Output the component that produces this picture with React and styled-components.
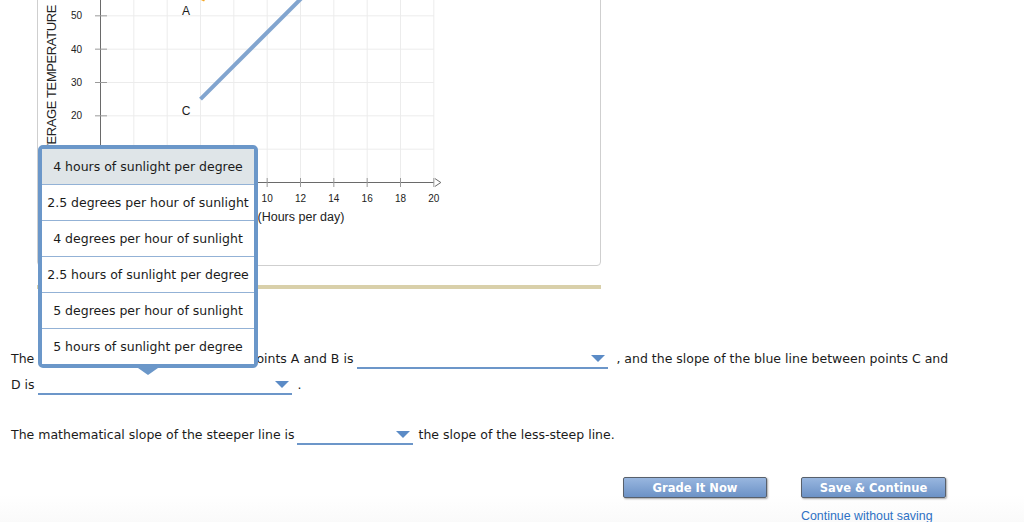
import React from 'react';
import styled, { createGlobalStyle } from 'styled-components';

const Global = createGlobalStyle`
  html, body { margin: 0; padding: 0; background: #fff; overflow: hidden; }
  body { font-family: "DejaVu Sans", Verdana, sans-serif; color: #1b1b1b; }
`;

const Page = styled.div`
  width: 1024px;
  height: 522px;
  box-sizing: border-box;
  padding: 0 11px;
  overflow: hidden;
  display: flex;
  flex-direction: column;
  background: linear-gradient(#fff 0, #fff 495px, #fafafa 522px);
`;

const ChartPanel = styled.div`
  margin: -34px 0 0 26px;
  width: 564px;
  height: 300px;
  box-sizing: border-box;
  border: 1px solid #cfcfcf;
  border-radius: 4px;
  overflow: hidden;
  background: #fff;
  flex: none;
  svg { display: block; }
`;

const Divider = styled.div`
  margin: 19px 0 0 26px;
  width: 564px;
  height: 4px;
  background: #d9d0aa;
  flex: none;
`;

const Question = styled.div`
  position: relative;
  margin-top: 57px;
  font-size: 12.5px;
  line-height: 26px;
`;

const Para = styled.p`
  margin: ${p => (p.$gap ? '24px' : '0')} 0 0;
  white-space: nowrap;
`;

const Select = styled.span`
  display: inline-block;
  position: relative;
  width: ${p => p.$w}px;
  height: 16px;
  box-sizing: border-box;
  border-bottom: 2px solid #6c96c9;
  vertical-align: -6px;
  margin: 0 ${p => p.$mr}px 0 ${p => p.$ml}px;
  &::after {
    content: '';
    position: absolute;
    right: 3px;
    bottom: 5px;
    border-left: 7.5px solid transparent;
    border-right: 7.5px solid transparent;
    border-top: 7px solid #5b8bc6;
  }
`;

const Menu = styled.ul`
  position: absolute;
  top: -201px;
  left: 27px;
  width: 220px;
  margin: 0;
  padding: 0;
  list-style: none;
  box-sizing: border-box;
  border: 4px solid #6b97c9;
  border-radius: 5px;
  background: #fff;
  z-index: 5;
  &::after {
    content: '';
    position: absolute;
    left: 50%;
    margin-left: -10px;
    bottom: -11px;
    border-left: 10px solid transparent;
    border-right: 10px solid transparent;
    border-top: 7px solid #6b97c9;
  }
`;

const Option = styled.li`
  height: 35px;
  display: flex;
  align-items: center;
  justify-content: center;
  font-size: 12.5px;
  color: #1b1b1b;
  white-space: nowrap;
  background: ${p => (p.$active ? '#dfe5e8' : '#fff')};
  & + & { border-top: 1px solid #93b2d6; }
`;

const ButtonRow = styled.div`
  display: flex;
  justify-content: flex-end;
  align-items: flex-start;
  gap: 34px;
  margin-top: 29px;
  padding-right: 67px;
`;

const Column = styled.div`
  display: flex;
  flex-direction: column;
  align-items: flex-start;
`;

const Button = styled.button`
  width: ${p => p.$w}px;
  height: 21px;
  padding: 0;
  border: 1px solid #58606b;
  border-radius: 2px;
  background: linear-gradient(#98b6df, #6c92c6);
  color: #fff;
  font-family: "DejaVu Sans", Verdana, sans-serif;
  font-weight: bold;
  font-size: 11.5px;
  box-shadow: 1px 1px 2px rgba(0, 0, 0, 0.35);
  cursor: pointer;
`;

const Link = styled.a`
  margin-top: 11px;
  font-family: "Liberation Sans", Arial, sans-serif;
  font-size: 12.4px;
  color: #2e71c4;
  text-decoration: none;
  line-height: 14px;
`;

const X = h => 100.5 + h * 16.6667;
const Y = v => 182.5 - v * 3.33333;

function Chart() {
  const hours = [2, 4, 6, 8, 10, 12, 14, 16, 18, 20];
  const shownHours = [10, 12, 14, 16, 18, 20];
  const temps = [10, 20, 30, 40, 50, 60];
  const shownTemps = [20, 30, 40, 50];
  return (
    <svg width="562" height="298" viewBox="38 -33 562 298">
      <g stroke="#ececec" strokeWidth="1">
        {hours.map(h => (
          <line key={'v' + h} x1={X(h)} y1={-40} x2={X(h)} y2={182.5} />
        ))}
        {temps.map(v => (
          <line key={'h' + v} x1={100.5} y1={Y(v)} x2={X(20)} y2={Y(v)} />
        ))}
      </g>
      <g stroke="#6a6a6a" strokeWidth="1" fill="none">
        <line x1={100.5} y1={-40} x2={100.5} y2={182.5} />
        <line x1={100.5} y1={182.5} x2={X(20)} y2={182.5} />
        <polyline points={`${X(20) + 1},178.5 ${X(20) + 7},182.5 ${X(20) + 1},186.5`} />
      </g>
      <g stroke="#9a9a9a" strokeWidth="1">
        {temps.map(v => (
          <line key={'yt' + v} x1={95} y1={Y(v)} x2={107} y2={Y(v)} />
        ))}
        {hours.map(h => (
          <line key={'xt' + h} x1={X(h)} y1={178} x2={X(h)} y2={187} />
        ))}
      </g>
      <g fontFamily="Liberation Sans, Arial, sans-serif" fontSize="10" fill="#222">
        {shownTemps.map(v => (
          <text key={'yl' + v} x={82} y={Y(v) + 3.5} textAnchor="end">{v}</text>
        ))}
        {shownHours.map(h => (
          <text key={'xl' + h} x={X(h)} y={201.5} textAnchor="middle">{h}</text>
        ))}
      </g>
      <text x={257.5} y={220.5} fontFamily="Liberation Sans, Arial, sans-serif" fontSize="12.5" fill="#222">
        (Hours per day)
      </text>
      <text
        transform="translate(55.5,160) rotate(-90)"
        fontFamily="Liberation Sans, Arial, sans-serif"
        fontSize="13"
        letterSpacing="-0.4"
        fill="#222"
      >
        AVERAGE TEMPERATURE
      </text>
      <line x1={X(6)} y1={Y(25)} x2={X(14)} y2={Y(65)} stroke="#82a5cf" strokeWidth="4" />
      <line x1={202.5} y1={0.8} x2={236} y2={-66} stroke="#f5a623" strokeWidth="3.5" />
      <g fontFamily="Liberation Sans, Arial, sans-serif" fontSize="12" fill="#1b1b1b" textAnchor="middle">
        <text x={186} y={15.3}>A</text>
        <text x={186} y={115.3}>C</text>
      </g>
    </svg>
  );
}

const options = [
  '4 hours of sunlight per degree',
  '2.5 degrees per hour of sunlight',
  '4 degrees per hour of sunlight',
  '2.5 hours of sunlight per degree',
  '5 degrees per hour of sunlight',
  '5 hours of sunlight per degree',
];

export default function App() {
  return (
    <>
      <Global />
      <Page>
        <ChartPanel>
          <Chart />
        </ChartPanel>
        <Divider />
        <Question>
          <Para>
            The slope of the orange line between points A and B is{' '}
            <Select $w={251} $ml={0} $mr={4} />{' '}
            , and the slope of the blue line between points C and
            <br />
            D is{' '}
            <Select $w={254} $ml={-1} $mr={2} />{' '}.
          </Para>
          <Para $gap>
            The mathematical slope of the steeper line is{' '}
            <Select $w={116} $ml={-2} $mr={2} />{' '}
            the slope of the less-steep line.
          </Para>
          <Menu>
            {options.map((o, i) => (
              <Option key={o} $active={i === 0}>{o}</Option>
            ))}
          </Menu>
        </Question>
        <ButtonRow>
          <Button $w={144}>Grade It Now</Button>
          <Column>
            <Button $w={145}>Save &amp; Continue</Button>
            <Link href="#">Continue without saving</Link>
          </Column>
        </ButtonRow>
      </Page>
    </>
  );
}
